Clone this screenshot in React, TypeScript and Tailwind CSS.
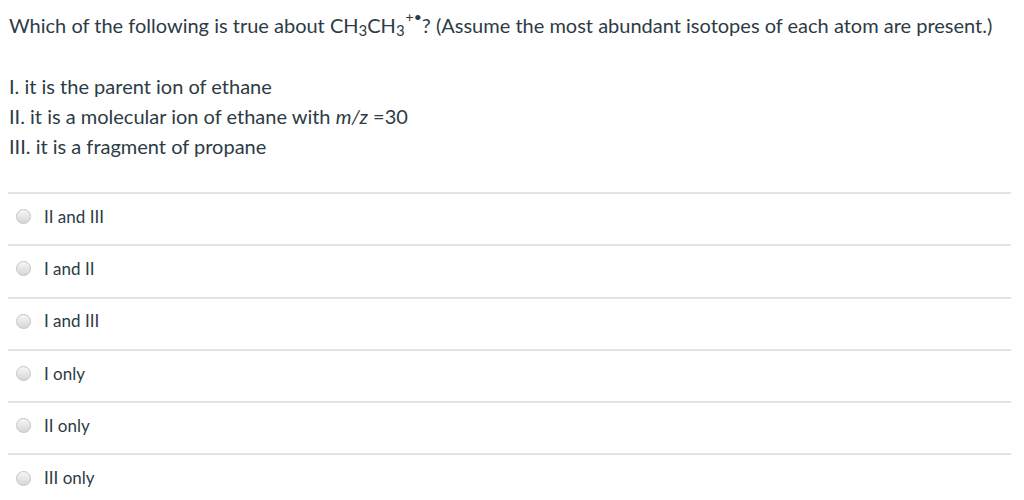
import React from "react";

const options = ["II and III", "I and II", "I and III", "I only", "II only", "III only"];

export default function App() {
  return (
    <div className="w-[1024px] h-[500px] bg-white overflow-hidden px-2 text-[#2d3b45]" style={{ fontFamily: "Lato, 'Open Sans', sans-serif" }}>
      <div className="pt-[10px] text-[20px] leading-[30px] pl-px">
        <div className="h-[30px]">
          Which of the following is true about CH<span className="text-[15px] align-[-3px] leading-none">3</span>CH<span className="text-[15px] align-[-3px] leading-none">3</span><span className="text-[14px] align-[11px] leading-none ml-px">+•</span>? (Assume the most abundant isotopes of each atom are present.)
        </div>
      </div>
      <div className="mt-[31px] text-[20px] leading-[30px] pl-px">
        <div>I. it is the parent ion of ethane</div>
        <div>II. it is a molecular ion of ethane with <i>m/z</i> =30</div>
        <div>III. it is a fragment of propane</div>
      </div>
      <div className="mt-[31px] w-[1003px]">
        {options.map((o) => (
          <div key={o} className="h-[52.3px] border-t-2 border-[#e4e4e4] flex items-center pl-2 pb-[5px]">
            <span className="w-[15px] h-[15px] rounded-full border border-[#c4c4c4] bg-gradient-to-b from-[#f7f7f7] to-[#d6d6d6] shrink-0" />
            <span className="ml-[13px] text-[17px] text-[#2d3b45]">{o}</span>
          </div>
        ))}
      </div>
    </div>
  );
}
